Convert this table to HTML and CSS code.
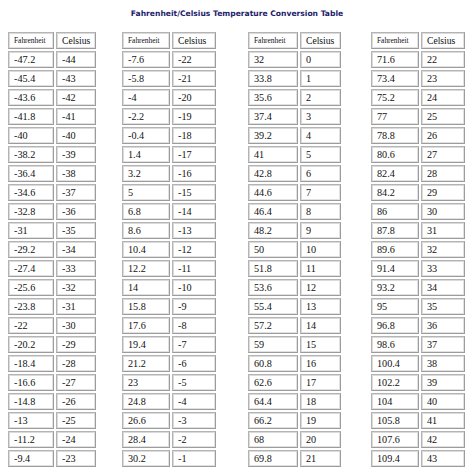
FILE: index.html
```html
<!DOCTYPE html>
<html>
<head>
<meta charset="utf-8">
<title>Fahrenheit/Celsius Temperature Conversion Table</title>
<link rel="stylesheet" href="styles.css">
</head>
<body>
<h1 class="title">Fahrenheit/Celsius Temperature Conversion Table</h1>
<div class="tables">
<table class="conv t1">
<tr><th class="fh">Fahrenheit</th><th class="ch">Celsius</th></tr>
<tr><td>-47.2</td><td>-44</td></tr>
<tr><td>-45.4</td><td>-43</td></tr>
<tr><td>-43.6</td><td>-42</td></tr>
<tr><td>-41.8</td><td>-41</td></tr>
<tr><td>-40</td><td>-40</td></tr>
<tr><td>-38.2</td><td>-39</td></tr>
<tr><td>-36.4</td><td>-38</td></tr>
<tr><td>-34.6</td><td>-37</td></tr>
<tr><td>-32.8</td><td>-36</td></tr>
<tr><td>-31</td><td>-35</td></tr>
<tr><td>-29.2</td><td>-34</td></tr>
<tr><td>-27.4</td><td>-33</td></tr>
<tr><td>-25.6</td><td>-32</td></tr>
<tr><td>-23.8</td><td>-31</td></tr>
<tr><td>-22</td><td>-30</td></tr>
<tr><td>-20.2</td><td>-29</td></tr>
<tr><td>-18.4</td><td>-28</td></tr>
<tr><td>-16.6</td><td>-27</td></tr>
<tr><td>-14.8</td><td>-26</td></tr>
<tr><td>-13</td><td>-25</td></tr>
<tr><td>-11.2</td><td>-24</td></tr>
<tr><td>-9.4</td><td>-23</td></tr>
</table>
<table class="conv t2">
<tr><th class="fh">Fahrenheit</th><th class="ch">Celsius</th></tr>
<tr><td>-7.6</td><td>-22</td></tr>
<tr><td>-5.8</td><td>-21</td></tr>
<tr><td>-4</td><td>-20</td></tr>
<tr><td>-2.2</td><td>-19</td></tr>
<tr><td>-0.4</td><td>-18</td></tr>
<tr><td>1.4</td><td>-17</td></tr>
<tr><td>3.2</td><td>-16</td></tr>
<tr><td>5</td><td>-15</td></tr>
<tr><td>6.8</td><td>-14</td></tr>
<tr><td>8.6</td><td>-13</td></tr>
<tr><td>10.4</td><td>-12</td></tr>
<tr><td>12.2</td><td>-11</td></tr>
<tr><td>14</td><td>-10</td></tr>
<tr><td>15.8</td><td>-9</td></tr>
<tr><td>17.6</td><td>-8</td></tr>
<tr><td>19.4</td><td>-7</td></tr>
<tr><td>21.2</td><td>-6</td></tr>
<tr><td>23</td><td>-5</td></tr>
<tr><td>24.8</td><td>-4</td></tr>
<tr><td>26.6</td><td>-3</td></tr>
<tr><td>28.4</td><td>-2</td></tr>
<tr><td>30.2</td><td>-1</td></tr>
</table>
<table class="conv t3">
<tr><th class="fh">Fahrenheit</th><th class="ch">Celsius</th></tr>
<tr><td>32</td><td>0</td></tr>
<tr><td>33.8</td><td>1</td></tr>
<tr><td>35.6</td><td>2</td></tr>
<tr><td>37.4</td><td>3</td></tr>
<tr><td>39.2</td><td>4</td></tr>
<tr><td>41</td><td>5</td></tr>
<tr><td>42.8</td><td>6</td></tr>
<tr><td>44.6</td><td>7</td></tr>
<tr><td>46.4</td><td>8</td></tr>
<tr><td>48.2</td><td>9</td></tr>
<tr><td>50</td><td>10</td></tr>
<tr><td>51.8</td><td>11</td></tr>
<tr><td>53.6</td><td>12</td></tr>
<tr><td>55.4</td><td>13</td></tr>
<tr><td>57.2</td><td>14</td></tr>
<tr><td>59</td><td>15</td></tr>
<tr><td>60.8</td><td>16</td></tr>
<tr><td>62.6</td><td>17</td></tr>
<tr><td>64.4</td><td>18</td></tr>
<tr><td>66.2</td><td>19</td></tr>
<tr><td>68</td><td>20</td></tr>
<tr><td>69.8</td><td>21</td></tr>
</table>
<table class="conv t4">
<tr><th class="fh">Fahrenheit</th><th class="ch">Celsius</th></tr>
<tr><td>71.6</td><td>22</td></tr>
<tr><td>73.4</td><td>23</td></tr>
<tr><td>75.2</td><td>24</td></tr>
<tr><td>77</td><td>25</td></tr>
<tr><td>78.8</td><td>26</td></tr>
<tr><td>80.6</td><td>27</td></tr>
<tr><td>82.4</td><td>28</td></tr>
<tr><td>84.2</td><td>29</td></tr>
<tr><td>86</td><td>30</td></tr>
<tr><td>87.8</td><td>31</td></tr>
<tr><td>89.6</td><td>32</td></tr>
<tr><td>91.4</td><td>33</td></tr>
<tr><td>93.2</td><td>34</td></tr>
<tr><td>95</td><td>35</td></tr>
<tr><td>96.8</td><td>36</td></tr>
<tr><td>98.6</td><td>37</td></tr>
<tr><td>100.4</td><td>38</td></tr>
<tr><td>102.2</td><td>39</td></tr>
<tr><td>104</td><td>40</td></tr>
<tr><td>105.8</td><td>41</td></tr>
<tr><td>107.6</td><td>42</td></tr>
<tr><td>109.4</td><td>43</td></tr>
</table>
</div>
</body>
</html>
```
FILE: styles.css
```css
html, body {
  margin: 0;
  padding: 0;
  background: #ffffff;
}

body {
  font-family: "Liberation Serif", "Times New Roman", serif;
  color: #111111;
}

.title {
  margin: 0;
  height: 30px;
  padding-top: 9px;
  box-sizing: border-box;
  text-align: center;
  font-family: "DejaVu Sans", Verdana, sans-serif;
  font-weight: bold;
  font-size: 7.6px;
  line-height: 10px;
  color: #231c6b;
}

.tables {
  display: grid;
  grid-template-columns: 114px 126px 123px auto;
  justify-items: start;
  align-items: start;
  padding-left: 6px;
}

.conv {
  border-collapse: separate;
  border-spacing: 2px;
  border: 0;
  font-family: "Liberation Serif", "Times New Roman", serif;
}

.conv th,
.conv td {
  box-sizing: border-box;
  height: 17px;
  padding: 0 0 0 5px;
  border: 1px solid #b4b4b4;
  border-right-color: #9c9c9c;
  border-bottom-color: #9c9c9c;
  box-shadow: inset 1px 1px 0 #dadada, inset -1px -1px 0 #e2e2e2;
  text-align: left;
  vertical-align: middle;
  font-weight: normal;
  font-size: 10.2px;
  line-height: 15px;
  white-space: nowrap;
}

.conv .fh {
  font-size: 7.4px;
}

.conv .ch {
  font-size: 9.6px;
}

.t1 td:first-child, .t1 th:first-child { width: 46px; }
.t1 td:last-child, .t1 th:last-child { width: 40px; }
.t2 td:first-child, .t2 th:first-child { width: 48px; }
.t2 td:last-child, .t2 th:last-child { width: 44px; }
.t3 td:first-child, .t3 th:first-child { width: 50px; }
.t3 td:last-child, .t3 th:last-child { width: 41px; }
.t4 td:first-child, .t4 th:first-child { width: 48px; }
.t4 td:last-child, .t4 th:last-child { width: 44px; }
```
